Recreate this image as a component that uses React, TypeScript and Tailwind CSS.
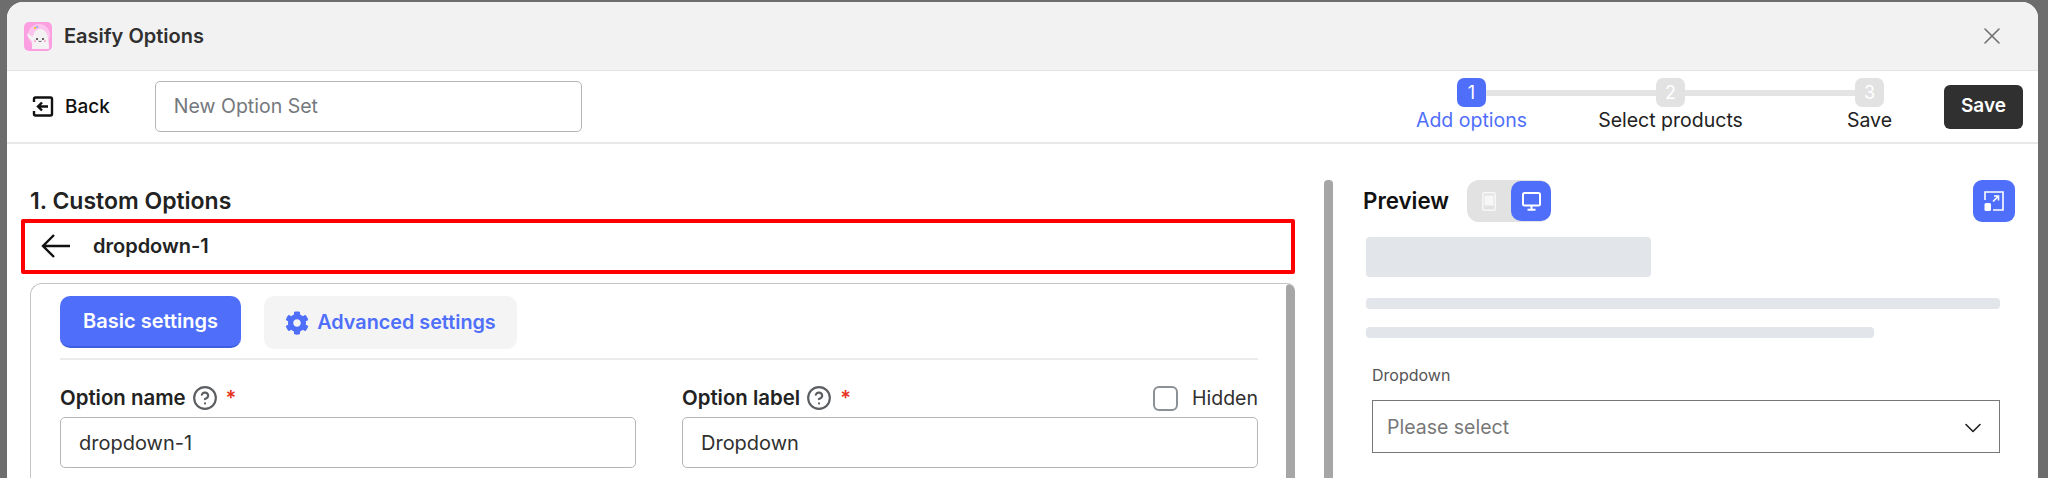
import { ChevronDown, CircleHelp, X } from "lucide-react";
import { FaCog } from "react-icons/fa";

function AppLogo() {
  return (
    <svg width="28" height="29" viewBox="0 0 28 29" className="shrink-0">
      <rect width="28" height="29" rx="5" fill="#fb9fe0" />
      <circle cx="15" cy="13" r="11" fill="#fcc4ec" />
      <path d="M8 27 C8 16 9 7 16 7 C23 7 25 15 25 27 Z" fill="#f4f1f3" />
      <path d="M9 15 L3 11 L4 15 L9 20 Z" fill="#f4f1f3" />
      <circle cx="13" cy="17" r="1" fill="#333" />
      <circle cx="19" cy="17" r="1" fill="#333" />
      <path d="M14.5 19 q1.5 1.5 3 0" stroke="#333" strokeWidth="0.7" fill="none" />
      <circle cx="11" cy="19" r="1.2" fill="#f9b6dc" />
      <circle cx="21" cy="19" r="1.2" fill="#f9b6dc" />
      <circle cx="11" cy="6" r="1.2" fill="#f5c451" />
      <circle cx="13" cy="5" r="1" fill="#7aa7f0" />
    </svg>
  );
}

function BackIcon() {
  return (
    <svg width="22" height="21" viewBox="0 0 22 21" fill="none" stroke="#111" strokeWidth="2.4" className="shrink-0">
      <path d="M2 6 V3 Q2 1.5 3.5 1.5 H18.5 Q20 1.5 20 3 V18 Q20 19.5 18.5 19.5 H3.5 Q2 19.5 2 18 V15" />
      <path d="M16 10.5 H6 M10 6.5 L6 10.5 L10 14.5" />
    </svg>
  );
}

function BigArrow() {
  return (
    <svg width="30" height="24" viewBox="0 0 30 24" fill="none" stroke="#111" strokeWidth="2.4" className="shrink-0">
      <path d="M29 12 H2 M13 1 L2 12 L13 23" />
    </svg>
  );
}

function PhoneIcon() {
  return (
    <svg width="14" height="19" viewBox="0 0 14 19" fill="none">
      <rect x="0.75" y="0.75" width="12.5" height="17.5" rx="1.5" stroke="#f7f7f7" strokeWidth="1.5" />
      <rect x="2.5" y="3.5" width="9" height="10" fill="#f7f7f7" />
    </svg>
  );
}

function MonitorIcon() {
  return (
    <svg width="19" height="19" viewBox="0 0 19 19" fill="none">
      <rect x="1" y="1" width="17" height="12.5" rx="1.5" stroke="#fff" strokeWidth="2" />
      <path d="M9.5 14 V17 M5.5 17.8 H13.5" stroke="#fff" strokeWidth="2" />
    </svg>
  );
}

function ExpandIcon() {
  return (
    <svg width="20" height="20" viewBox="0 0 20 20" fill="none">
      <path d="M1 9 V1 H19 V19 H9" stroke="#fff" strokeWidth="1.6" />
      <path d="M9 10.5 L14.5 5 M10 5 H14.5 V9.5" stroke="#fff" strokeWidth="1.6" />
      <rect x="0.5" y="12" width="6.5" height="8" rx="1.5" fill="#fff" />
    </svg>
  );
}

function Step({ n, label, active }: { n: number; label: string; active?: boolean }) {
  return (
    <div className="flex flex-col items-center w-[29px] relative z-10">
      <div
        className={
          active
            ? "w-[29px] h-[29px] rounded-[7px] bg-[#4f6ffb] text-white flex items-center justify-center text-[18px]"
            : "w-[29px] h-[29px] rounded-[7px] bg-[#e2e2e2] text-white flex items-center justify-center text-[18px]"
        }
      >
        {n}
      </div>
      <span
        className={
          active
            ? "text-[19.5px] leading-[26px] whitespace-nowrap text-[#4f6ffb]"
            : "text-[19.5px] leading-[26px] whitespace-nowrap text-[#222]"
        }
      >
        {label}
      </span>
    </div>
  );
}

function FieldLabel({ text }: { text: string }) {
  return (
    <div className="flex items-center h-[26px]">
      <span className="text-[20.4px] font-semibold text-[#222]">{text}</span>
      <CircleHelp size={26} strokeWidth={2} className="ml-[6px] text-[#5c5f62]" />
      <span className="ml-[8px] text-[20px] font-semibold text-[#e5321c] leading-none">*</span>
    </div>
  );
}

export default function App() {
  return (
    <div
      className="h-[478px] w-full overflow-hidden bg-[#6d6d6d] pl-[7px] pr-[10px] pt-[2px]"
      style={{ fontFamily: "Inter, 'Noto Sans', sans-serif" }}
    >
      <div className="h-[476px] flex flex-col bg-white rounded-t-[16px] overflow-hidden">
        {/* Title bar */}
        <div className="h-[69px] shrink-0 bg-[#f2f2f2] border-b border-[#e3e3e3] flex items-center pl-[17px] pr-[32px]">
          <AppLogo />
          <span className="ml-[12px] text-[20px] font-semibold text-[#303030]">Easify Options</span>
          <X size={28} strokeWidth={1.3} className="ml-auto text-[#6f6f6f]" />
        </div>

        {/* Toolbar */}
        <div className="h-[71px] shrink-0 flex items-center pl-[25px] pr-[15px] shadow-[0_2px_0_#e8e8e8]">
          <BackIcon />
          <span className="ml-[11px] pt-[1px] text-[19px] font-medium text-[#111]">Back</span>
          <div className="ml-[45px] w-[427px] h-[51px] border border-[#b5b5b5] rounded-[5px] flex items-center pl-[18px] text-[19.5px] text-[#74787c]">
            New Option Set
          </div>

          <div className="ml-auto relative flex gap-[170px] h-[56px] self-start mt-[7px] mr-[60px]">
            <div className="absolute left-[14px] right-[14px] top-[12px] h-[6px] bg-[#e4e4e4]" />
            <Step n={1} label="Add options" active />
            <Step n={2} label="Select products" />
            <Step n={3} label="Save" />
          </div>

          <button className="w-[79px] h-[44px] rounded-[6px] bg-[#303030] text-white text-[19px] font-semibold">
            Save
          </button>
        </div>

        {/* Body */}
        <div className="flex-1 min-h-0 flex">
          {/* Left column */}
          <div className="w-[1274px] ml-[14px] shrink-0 pt-[45px] flex flex-col">
            <h2 className="ml-[9px] text-[23px] leading-[28px] font-semibold text-[#222]">1. Custom Options</h2>
            <div className="mt-[4px] h-[55px] shrink-0 border-[4px] border-[#ff0000] rounded-[2px] flex items-center pl-[16px] pb-[2px]">
              <BigArrow />
              <span className="ml-[22px] text-[20px] font-semibold text-[#222]">dropdown-1</span>
            </div>

            <div className="mt-[9px] ml-[9px] flex-1 min-h-0 flex border-l border-t border-[#c4c4c4] rounded-tl-[12px] rounded-tr-[8px] overflow-hidden">
              <div className="flex-1 pl-[29px] pr-[28px] pt-[12px]">
                <div className="flex gap-[23px] pb-[9px] border-b-2 border-[#ebebeb]">
                  <button className="w-[181px] h-[52px] rounded-[10px] bg-[#4f6ffb] border-b-2 border-[#3f5de0] text-white text-[20px] font-semibold">
                    Basic settings
                  </button>
                  <button className="w-[253px] h-[53px] rounded-[10px] bg-[#f4f4f4] text-[#4f6ffb] text-[19.8px] font-semibold flex items-center justify-center gap-[8px]">
                    <FaCog size={24} />
                    Advanced settings
                  </button>
                </div>

                <div className="mt-[25px] flex gap-[46px]">
                  <div className="w-[576px]">
                    <FieldLabel text="Option name" />
                    <div className="mt-[6px] h-[51px] border border-[#b5b5b5] rounded-[5px] flex items-center pl-[18px] text-[20px] text-[#303030]">
                      dropdown-1
                    </div>
                  </div>
                  <div className="flex-1">
                    <div className="flex items-center h-[26px]">
                      <FieldLabel text="Option label" />
                      <div className="ml-auto w-[25px] h-[25px] rounded-[6px] border-2 border-[#8c9196]" />
                      <span className="ml-[14px] text-[19.5px] leading-[26px] text-[#303030]">Hidden</span>
                    </div>
                    <div className="mt-[6px] h-[51px] border border-[#b5b5b5] rounded-[5px] flex items-center pl-[18px] text-[20px] text-[#303030]">
                      Dropdown
                    </div>
                  </div>
                </div>
              </div>
              {/* card scrollbar */}
              <div className="w-[9px] shrink-0 bg-[#a6a6a6] rounded-t-[4px]" />
            </div>
          </div>

          {/* Divider scrollbar */}
          <div className="ml-[29px] mt-[38px] w-[9px] shrink-0 bg-[#a6a6a6] rounded-t-[4px]" />

          {/* Preview */}
          <div className="flex-1 min-w-0 pl-[30px] pr-[23px] pt-[38px]">
            <div className="flex items-center h-[42px]">
              <span className="text-[22.3px] font-semibold text-[#111]">Preview</span>
              <div className="ml-[18px] w-[84px] h-[42px] rounded-[12px] bg-[#e2e2e2] flex items-center">
                <div className="w-[44px] flex justify-center">
                  <PhoneIcon />
                </div>
                <div className="w-[40px] h-[40px] rounded-[10px] bg-[#4f6ffb] flex items-center justify-center">
                  <MonitorIcon />
                </div>
              </div>
              <div className="ml-auto w-[42px] h-[42px] rounded-[9px] bg-[#4f6ffb] flex items-center justify-center">
                <ExpandIcon />
              </div>
            </div>

            <div className="ml-[3px] mr-[15px] mt-[15px]">
              <div className="w-[285px] h-[40px] rounded-[4px] bg-[#e2e5e9]" />
              <div className="mt-[21px] h-[11px] rounded-[4px] bg-[#e2e5e9]" />
              <div className="mt-[18px] w-[508px] h-[11px] rounded-[4px] bg-[#e2e5e9]" />
            </div>

            <div className="ml-[9px] mr-[15px] mt-[24px]">
              <div className="text-[16px] leading-[26px] text-[#555]">Dropdown</div>
              <div className="mt-[12px] h-[53px] border border-[#777] flex items-center justify-between pl-[14px] pr-[12px] pt-[2px] text-[19.5px] text-[#777]">
                Please select
                <ChevronDown size={28} strokeWidth={1.4} className="text-[#222]" />
              </div>
            </div>
          </div>
        </div>
      </div>
    </div>
  );
}
